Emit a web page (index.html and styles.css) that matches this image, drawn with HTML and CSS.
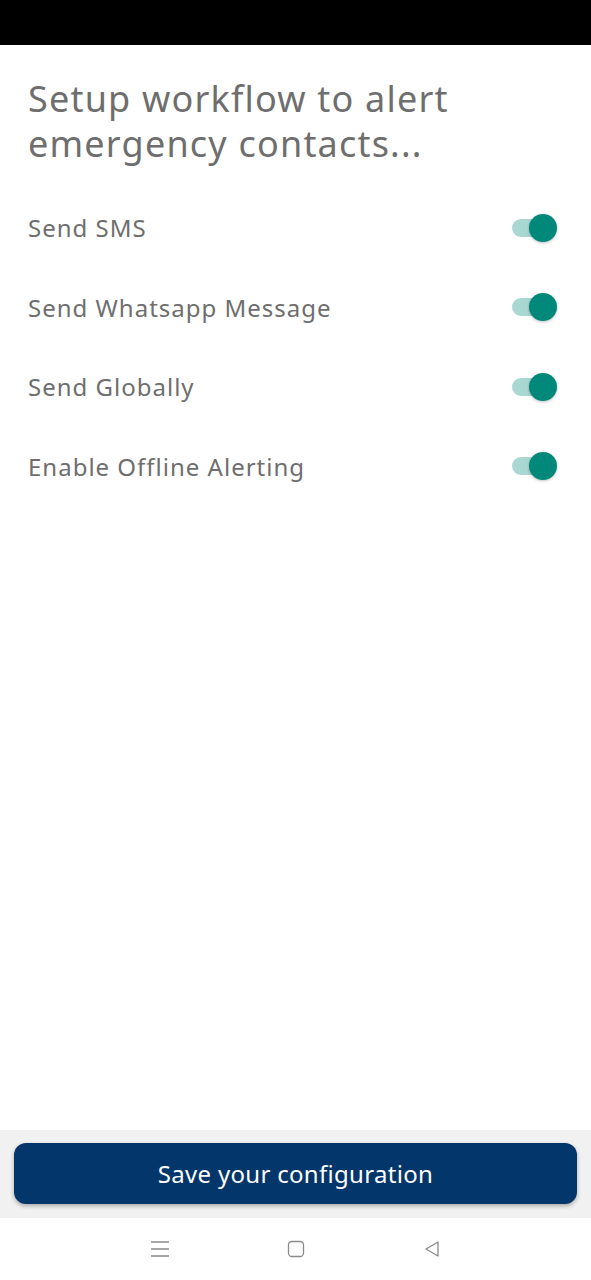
FILE: index.html
```html
<!DOCTYPE html>
<html lang="en">
<head>
  <meta charset="UTF-8">
  <meta name="viewport" content="width=device-width, initial-scale=1.0">
  <title>Alert workflow</title>
  <link rel="stylesheet" href="styles.css">
</head>
<body>
  <div class="statusBar"></div>

  <main class="content">
    <h1>Setup workflow to alert emergency contacts...</h1>

    <ul class="options">
      <li class="option">
        <span>Send SMS</span>
        <span class="toggle on"><span class="knob"></span></span>
      </li>
      <li class="option">
        <span>Send Whatsapp Message</span>
        <span class="toggle on"><span class="knob"></span></span>
      </li>
      <li class="option">
        <span>Send Globally</span>
        <span class="toggle on"><span class="knob"></span></span>
      </li>
      <li class="option">
        <span>Enable Offline Alerting</span>
        <span class="toggle on"><span class="knob"></span></span>
      </li>
    </ul>
  </main>

  <div class="saveArea">
    <button class="saveBtn">Save your configuration</button>
  </div>

  <nav class="navBar">
    <svg width="20" height="18" viewBox="0 0 20 18">
      <path d="M1 2h18M1 9h18M1 16h18" stroke="#8a8a8a" stroke-width="1.3" fill="none"/>
    </svg>
    <svg width="20" height="20" viewBox="0 0 20 20">
      <rect x="2.5" y="2.5" width="15" height="15" rx="3.5" stroke="#8a8a8a" stroke-width="1.3" fill="none"/>
    </svg>
    <svg width="20" height="20" viewBox="0 0 20 20">
      <path d="M16 3L4 10l12 7z" stroke="#8a8a8a" stroke-width="1.3" stroke-linejoin="round" fill="none"/>
    </svg>
  </nav>
</body>
</html>
```

FILE: styles.css
```css
* {
  box-sizing: border-box;
}

body {
  margin: 0;
  height: 1280px;
  display: flex;
  flex-direction: column;
  font-family: "Noto Sans", "Open Sans", sans-serif;
  background-color: #fff;
  color: #707070;
}

.statusBar {
  height: 45px;
  background-color: #000;
}

.content {
  flex: 1;
  padding: 31px 28px 0 28px;
}

h1 {
  margin: 0;
  font-size: 36px;
  font-weight: 400;
  line-height: 45px;
  color: #6e6e6e;
  letter-spacing: 1.2px;
}

.options {
  list-style: none;
  margin: 22px 0 0 0;
  padding: 0;
}

.option {
  display: flex;
  align-items: center;
  justify-content: space-between;
  height: 79.5px;
  font-size: 24px;
  letter-spacing: 1px;
  color: #6e6e6e;
}

.toggle {
  position: relative;
  width: 36px;
  height: 18px;
  margin-right: 15px;
  border-radius: 9px;
  background-color: #a9d7d1;
}

.knob {
  position: absolute;
  top: -5px;
  right: -9px;
  width: 28px;
  height: 28px;
  border-radius: 50%;
  background-color: #00897a;
  box-shadow: 0 1px 3px rgba(0, 0, 0, 0.25);
}

.saveArea {
  height: 88px;
  padding: 13px 14px 0 14px;
  background-color: #f1f1f1;
}

.saveBtn {
  width: 100%;
  height: 61px;
  border: none;
  border-radius: 12px;
  background-color: #03366a;
  color: #fff;
  font-family: inherit;
  font-size: 24px;
  letter-spacing: 0.3px;
  box-shadow: 0 2px 4px rgba(0, 0, 0, 0.3);
}

.navBar {
  height: 62px;
  display: flex;
  align-items: center;
  justify-content: center;
  gap: 116px;
}
```
